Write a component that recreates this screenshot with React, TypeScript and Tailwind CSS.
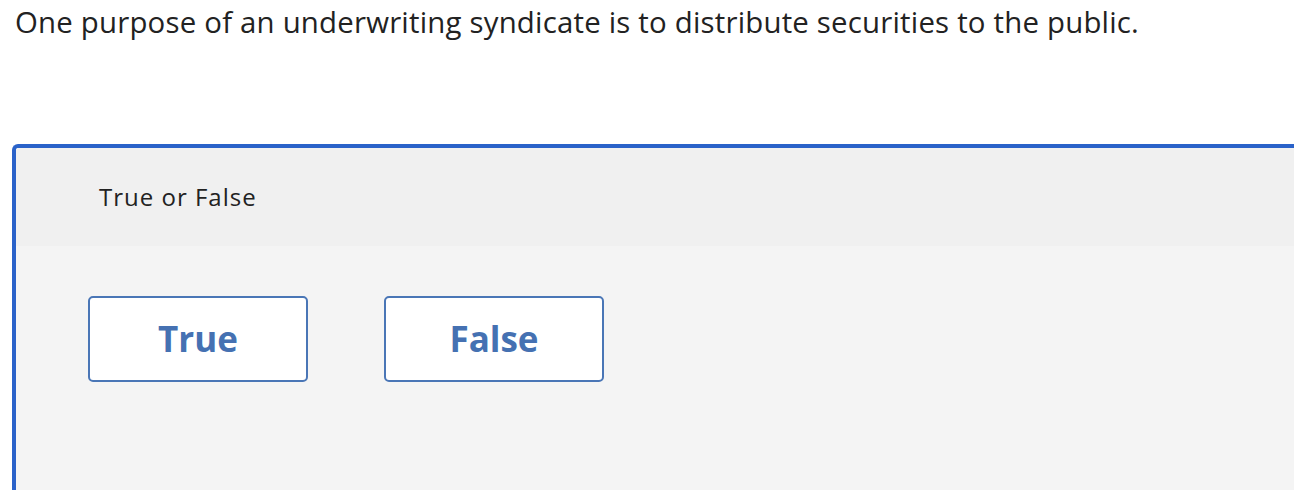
export default function App() {
  return (
    <div className="min-h-[490px] bg-white font-['Open_Sans','Lato',sans-serif] text-[#222] overflow-hidden">
      <h1 className="pl-[15px] pt-[2px] text-[29.4px] leading-[40px] font-normal tracking-[0.2px]">
        One purpose of an underwriting syndicate is to distribute securities to the public.
      </h1>

      <div className="mt-[102px] ml-[12px] -mr-[10px] border-l-4 border-t-4 border-[#2a62c9] rounded-tl-[6px] overflow-hidden">
        <div className="h-[98px] bg-[#f0f0f0] flex items-center pl-[83px]">
          <span className="text-[24px] leading-none tracking-[1px]">True or False</span>
        </div>
        <div className="bg-[#f4f4f4] h-[250px] pt-[50px] pl-[72px] flex gap-[76px] items-start">
          {["True", "False"].map((label) => (
            <button
              key={label}
              className="w-[220px] h-[86px] bg-white border-2 border-[#4a76b6] rounded-[5px] text-[35px] font-bold text-[#4571b2] flex items-center justify-center"
            >
              {label}
            </button>
          ))}
        </div>
      </div>
    </div>
  );
}
